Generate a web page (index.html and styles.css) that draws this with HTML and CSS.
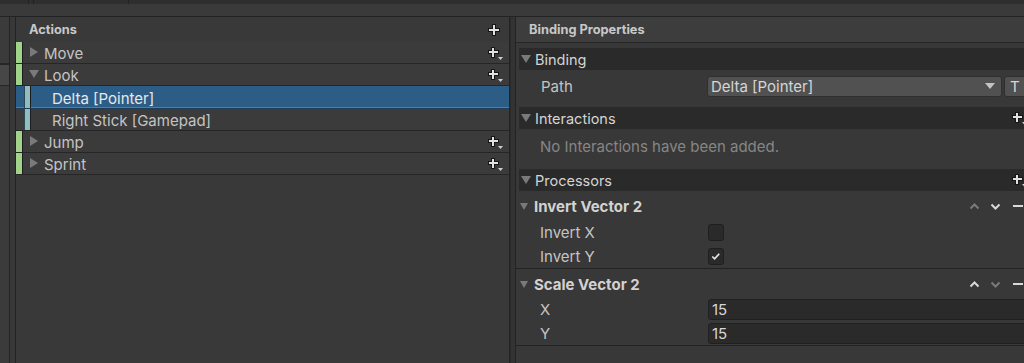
FILE: index.html
```html
<!DOCTYPE html>
<html lang="en">
<head>
    <meta charset="UTF-8">
    <title>Input Actions</title>
    <link rel="stylesheet" href="styles.css">
</head>
<body>
    <!-- Top strip -->
    <div class="topbar">
        <div class="tabs">
            <span class="tab tab-a"></span>
            <span class="tab tab-b"></span>
            <span class="tab tab-c"></span>
        </div>
    </div>

    <div class="main">
        <!-- Action maps (collapsed) -->
        <div class="maps">
            <div class="map"></div>
            <div class="map active"></div>
        </div>

        <!-- Actions tree -->
        <div class="actions">
            <div class="panel-head">
                <span>Actions</span>
                <svg class="plus" width="14" height="14" viewBox="0 0 14 14"><path d="M7 1v12M1 7h12" stroke="#151515" stroke-width="4"/><path d="M7 2v10M2 7h10" stroke="#e2e2e2" stroke-width="2"/></svg>
            </div>

            <div class="row">
                <span class="tag action-tag"></span>
                <span class="arrow arrow-right"></span>
                <span class="label">Move</span>
                <svg class="plus-dd" width="17" height="15" viewBox="0 0 17 15"><path d="M6 1v11M1 6h11" stroke="#151515" stroke-width="4"/><path d="M6 2v9M2 6h9" stroke="#e2e2e2" stroke-width="2"/><path d="M11 11h5l-2.5 3z" fill="#cfcfcf"/></svg>
            </div>
            <div class="row">
                <span class="tag action-tag"></span>
                <span class="arrow arrow-down"></span>
                <span class="label">Look</span>
                <svg class="plus-dd" width="17" height="15" viewBox="0 0 17 15"><path d="M6 1v11M1 6h11" stroke="#151515" stroke-width="4"/><path d="M6 2v9M2 6h9" stroke="#e2e2e2" stroke-width="2"/><path d="M11 11h5l-2.5 3z" fill="#cfcfcf"/></svg>
            </div>
            <div class="row binding selected">
                <span class="tag binding-tag"></span>
                <span class="label">Delta [Pointer]</span>
            </div>
            <div class="row binding">
                <span class="tag binding-tag"></span>
                <span class="label">Right Stick [Gamepad]</span>
            </div>
            <div class="row">
                <span class="tag action-tag"></span>
                <span class="arrow arrow-right"></span>
                <span class="label">Jump</span>
                <svg class="plus-dd" width="17" height="15" viewBox="0 0 17 15"><path d="M6 1v11M1 6h11" stroke="#151515" stroke-width="4"/><path d="M6 2v9M2 6h9" stroke="#e2e2e2" stroke-width="2"/><path d="M11 11h5l-2.5 3z" fill="#cfcfcf"/></svg>
            </div>
            <div class="row">
                <span class="tag action-tag"></span>
                <span class="arrow arrow-right"></span>
                <span class="label">Sprint</span>
                <svg class="plus-dd" width="17" height="15" viewBox="0 0 17 15"><path d="M6 1v11M1 6h11" stroke="#151515" stroke-width="4"/><path d="M6 2v9M2 6h9" stroke="#e2e2e2" stroke-width="2"/><path d="M11 11h5l-2.5 3z" fill="#cfcfcf"/></svg>
            </div>
        </div>

        <div class="splitter"></div>

        <!-- Binding properties -->
        <div class="props">
            <div class="panel-head">
                <span>Binding Properties</span>
            </div>

            <div class="props-body">
                <div class="section-head">
                    <span class="arrow arrow-down"></span>
                    <span>Binding</span>
                </div>
                <div class="section-body path-body">
                    <div class="field-row">
                        <span class="field-label">Path</span>
                        <div class="dropdown">
                            <span>Delta [Pointer]</span>
                            <span class="dd-arrow"></span>
                        </div>
                        <div class="t-button">T</div>
                    </div>
                </div>

                <div class="section-head">
                    <span class="arrow arrow-down"></span>
                    <span>Interactions</span>
                    <svg class="plus-dd head-plus" width="17" height="15" viewBox="0 0 17 15"><path d="M6 1v11M1 6h11" stroke="#151515" stroke-width="4"/><path d="M6 2v9M2 6h9" stroke="#e2e2e2" stroke-width="2"/><path d="M11 11h5l-2.5 3z" fill="#cfcfcf"/></svg>
                </div>
                <div class="section-body empty">No Interactions have been added.</div>

                <div class="section-head">
                    <span class="arrow arrow-down"></span>
                    <span>Processors</span>
                    <svg class="plus-dd head-plus" width="17" height="15" viewBox="0 0 17 15"><path d="M6 1v11M1 6h11" stroke="#151515" stroke-width="4"/><path d="M6 2v9M2 6h9" stroke="#e2e2e2" stroke-width="2"/><path d="M11 11h5l-2.5 3z" fill="#cfcfcf"/></svg>
                </div>

                <div class="processor">
                    <div class="proc-head">
                        <span class="arrow arrow-down small"></span>
                        <span class="proc-title">Invert Vector 2</span>
                        <div class="proc-tools">
                            <svg width="11" height="7" viewBox="0 0 11 7"><path d="M1.5 5.5l4-4 4 4" stroke="#7a7a7a" stroke-width="2" fill="none"/></svg>
                            <svg width="11" height="7" viewBox="0 0 11 7"><path d="M1.5 1.5l4 4 4-4" stroke="#d8d8d8" stroke-width="2" fill="none"/></svg>
                            <span class="minus"></span>
                        </div>
                    </div>
                    <div class="field-row">
                        <span class="field-label">Invert X</span>
                        <span class="checkbox"></span>
                    </div>
                    <div class="field-row">
                        <span class="field-label">Invert Y</span>
                        <span class="checkbox"><svg width="15" height="15" viewBox="0 0 15 15"><path d="M3.5 7.5l2.5 2.5 5-5.5" stroke="#e6e6e6" stroke-width="1.8" fill="none"/></svg></span>
                    </div>
                </div>

                <div class="processor">
                    <div class="proc-head">
                        <span class="arrow arrow-down small"></span>
                        <span class="proc-title">Scale Vector 2</span>
                        <div class="proc-tools">
                            <svg width="11" height="7" viewBox="0 0 11 7"><path d="M1.5 5.5l4-4 4 4" stroke="#d8d8d8" stroke-width="2" fill="none"/></svg>
                            <svg width="11" height="7" viewBox="0 0 11 7"><path d="M1.5 1.5l4 4 4-4" stroke="#7a7a7a" stroke-width="2" fill="none"/></svg>
                            <span class="minus"></span>
                        </div>
                    </div>
                    <div class="field-row">
                        <span class="field-label">X</span>
                        <div class="text-field">15</div>
                    </div>
                    <div class="field-row">
                        <span class="field-label">Y</span>
                        <div class="text-field">15</div>
                    </div>
                </div>
            </div>
        </div>
    </div>
</body>
</html>
```

FILE: styles.css
```css
* {
    box-sizing: border-box;
    margin: 0;
    padding: 0;
}

body {
    background: #383838;
    color: #c4c4c4;
    font-family: 'Inter', 'Noto Sans', sans-serif;
    font-size: 15px;
    width: 1024px;
    height: 363px;
    overflow: hidden;
}

/* Top strip */
.topbar {
    height: 17px;
    background: #3a3a3a;
    border-bottom: 1px solid #232323;
}

.tabs {
    height: 4px;
    background: #2e2e2e;
    display: flex;
}

.tab {
    height: 4px;
    border-right: 1px solid #222;
}

.tab-a { width: 29px; }
.tab-b { width: 5px; }
.tab-c { width: 95px; }

/* Main split */
.main {
    display: flex;
    height: 346px;
}

.maps {
    width: 10px;
    flex-shrink: 0;
    background: #3b3b3b;
    border-right: 1px solid #232323;
    padding-top: 24px;
}

.map {
    height: 23px;
    border-bottom: 1px solid #262626;
}

.map.active {
    background: #474747;
    border-top: 1px solid #262626;
    height: 22px;
}

/* Actions panel */
.actions {
    margin-left: 5px;
    width: 495px;
    flex-shrink: 0;
    background: #393939;
    border-left: 1px solid #232323;
    border-right: 1px solid #232323;
}

.panel-head {
    height: 25px;
    display: flex;
    align-items: center;
    justify-content: space-between;
    padding: 0 8px 0 13px;
    font-size: 12.8px;
    font-weight: 700;
    color: #c8c8c8;
}

.row {
    height: 22px;
    display: flex;
    align-items: center;
    border-bottom: 1px solid #262626;
    background: #3b3b3b;
}

.row .label {
    padding-top: 2px;
}

.row.selected {
    height: 23px;
    background: #2c5d87;
    border-bottom: 1px solid #1d3d5a;
    box-shadow: inset 0 -1px 0 #4a80b0;
}

.row.selected .label {
    color: #e8e8e8;
}

.tag {
    align-self: stretch;
    width: 7px;
    flex-shrink: 0;
    border-right: 1px solid #1c1c1c;
}

.action-tag {
    background: #a2d38b;
}

.binding-tag {
    margin-left: 8px;
    background: #92bcc1;
    border-left: 1px solid #2a4a52;
}

.arrow {
    width: 0;
    height: 0;
    flex-shrink: 0;
}

.arrow-right {
    margin: 0 6px 2px 7px;
    border-top: 5px solid transparent;
    border-bottom: 5px solid transparent;
    border-left: 8px solid #7a7a7a;
}

.arrow-down {
    margin: 0 5px 2px 6px;
    border-left: 5px solid transparent;
    border-right: 5px solid transparent;
    border-top: 8px solid #7a7a7a;
}

.arrow-down.small {
    margin: 0 6px 0 4px;
    border-left-width: 4px;
    border-right-width: 4px;
    border-top-width: 7px;
}

.label {
    flex: 1;
}

.binding .label {
    margin-left: 21px;
}

.plus-dd {
    margin-right: 5px;
    margin-top: 1px;
}

/* Splitter */
.splitter {
    width: 5px;
    flex-shrink: 0;
    background: #333;
    border-left: 1px solid #2b2b2b;
}

/* Binding properties panel */
.props {
    width: 521px;
    flex-shrink: 0;
    background: #383838;
    border-left: 1px solid #232323;
}

.props .panel-head {
    background: #3d3d3d;
    border-bottom: 1px solid #262626;
    height: 26px;
}

.props-body {
    padding-top: 5px;
}

.section-head {
    height: 22px;
    margin-left: 3px;
    display: flex;
    align-items: center;
    background: #2a2a2a;
    color: #d4d4d4;
    font-size: 14.5px;
}

.section-head .arrow-down {
    margin: 0 4px 0 2px;
}

.head-plus {
    margin-left: auto;
    margin-right: 8px;
}

.section-body {
    margin-left: 3px;
}

.path-body {
    padding: 6px 0 11px;
}

.empty {
    padding: 8px 0 15px 21px;
    height: 40px;
    color: #868686;
}

.field-row {
    height: 24px;
    display: flex;
    align-items: center;
}

.path-body .field-row {
    height: 20px;
}

.field-label {
    width: 192px;
    flex-shrink: 0;
    padding-left: 24px;
}

.path-body .field-label {
    width: 188px;
    padding-left: 22px;
}

.dropdown {
    width: 295px;
    height: 21px;
    background: #515151;
    border: 1px solid #2f2f2f;
    border-radius: 3px;
    display: flex;
    align-items: center;
    justify-content: space-between;
    padding: 0 5px 0 3px;
    color: #d6d6d6;
}

.dd-arrow {
    width: 0;
    height: 0;
    border-left: 5px solid transparent;
    border-right: 5px solid transparent;
    border-top: 6px solid #c4c4c4;
    margin-right: 1px;
}

.t-button {
    margin-left: 2px;
    width: 26px;
    height: 21px;
    background: #515151;
    border: 1px solid #2f2f2f;
    border-radius: 3px;
    color: #d6d6d6;
    padding-left: 5px;
    line-height: 19px;
}

/* Processors */
.processor {
    padding-top: 5px;
    border-bottom: 1px solid #232323;
}

.proc-head {
    height: 20px;
    margin-bottom: 4px;
    display: flex;
    align-items: center;
}

.processor + .processor .proc-head {
    margin-bottom: 3px;
}

.proc-title {
    font-weight: 700;
    color: #d2d2d2;
    font-size: 15px;
}

.proc-tools {
    margin-left: auto;
    display: flex;
    align-items: center;
    gap: 10px;
    padding-right: 13px;
}

.minus {
    width: 10px;
    height: 2px;
    background: #d8d8d8;
    margin-left: 2px;
}

.checkbox {
    width: 16px;
    height: 17px;
    background: #2a2a2a;
    border: 1px solid #1f1f1f;
    border-radius: 3px;
    display: flex;
    align-items: center;
    justify-content: center;
}

.text-field {
    width: 340px;
    height: 21px;
    background: #2a2a2a;
    border: 1px solid #202020;
    border-radius: 3px;
    padding-left: 3px;
    line-height: 19px;
    color: #d6d6d6;
}
```
